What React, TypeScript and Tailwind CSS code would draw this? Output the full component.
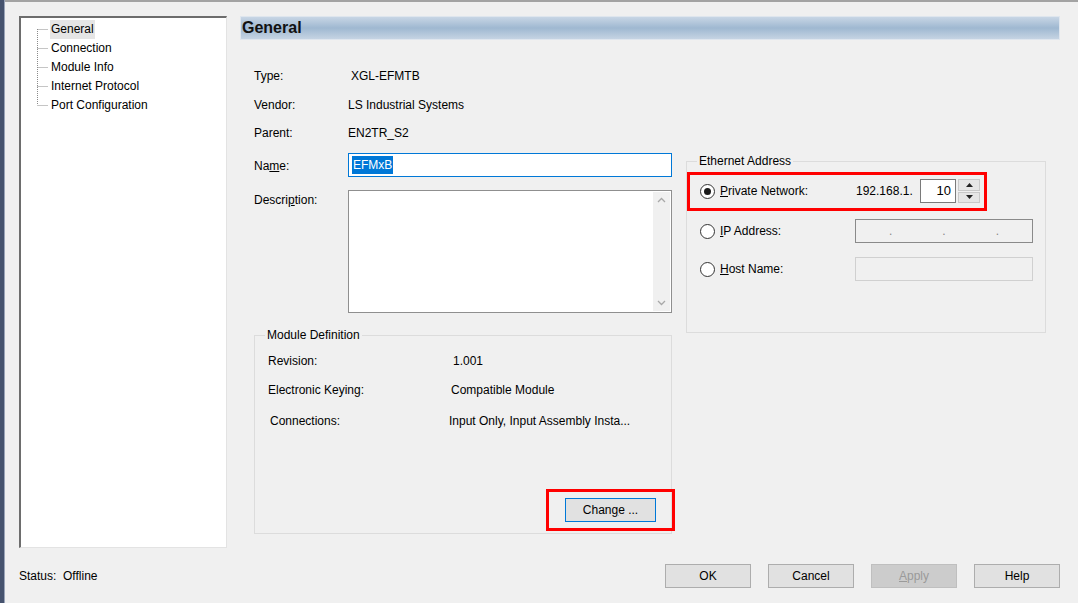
import React from 'react';

// Fenêtre de propriétés du module (style Windows classique)
const font = { fontFamily: '"Liberation Sans", Arial, sans-serif' };

function TreeLines() {
  return (
    <svg width="14" height="90" className="shrink-0" aria-hidden>
      <g stroke="#8a8a8a" strokeDasharray="1 1" strokeWidth="1" fill="none">
        <path d="M2.5 9 V85" />
        <path d="M2.5 9.5 H13" />
        <path d="M2.5 28.5 H13" />
        <path d="M2.5 47.5 H13" />
        <path d="M2.5 66.5 H13" />
        <path d="M2.5 85.5 H13" />
      </g>
    </svg>
  );
}

function Radio({ checked }: { checked?: boolean }) {
  return (
    <span className="w-[15px] h-[15px] rounded-full border border-[#333] bg-white flex items-center justify-center shrink-0">
      {checked && <span className="w-[7px] h-[7px] rounded-full bg-[#1a1a1a]" />}
    </span>
  );
}

function Btn({ children, disabled }: { children: React.ReactNode; disabled?: boolean }) {
  return (
    <div
      className={
        disabled
          ? 'w-[86px] h-[24px] flex items-center justify-center border border-[#bfbfbf] bg-[#cccccc] text-[#9a9a9a]'
          : 'w-[86px] h-[24px] flex items-center justify-center border border-[#adadad] bg-[#e1e1e1] text-black'
      }
    >
      {children}
    </div>
  );
}

export default function App() {
  return (
    <div className="relative w-[1078px] h-[603px] bg-[#f0f0f0] flex text-[12px] text-black overflow-hidden" style={font}>
      {/* bord gauche de la fenêtre */}
      <div className="w-[5px] h-full flex shrink-0">
        <div className="w-[4px] bg-[#46536e]" />
        <div className="w-[1px] bg-[#9aa4b8]" />
      </div>

      <div className="flex-1 flex flex-col border-t-2 border-[#a3a3a3]">
        <div className="flex mt-[14px]">
          {/* arbre de navigation */}
          <div className="ml-[14px] w-[208px] h-[532px] bg-white border-l-2 border-t-2 border-[#6d6d6d] border-r border-b border-r-[#e3e3e3] border-b-[#e3e3e3] pt-[2px] pl-[14px] flex">
            <TreeLines />
            <div className="flex flex-col leading-[19px] pl-[1px]">
              <span className="bg-[#e5e5e5] px-[1px] w-fit">General</span>
              <span className="px-[1px]">Connection</span>
              <span className="px-[1px]">Module Info</span>
              <span className="px-[1px]">Internet Protocol</span>
              <span className="px-[1px]">Port Configuration</span>
            </div>
          </div>

          {/* contenu */}
          <div className="ml-[13px] w-[820px] flex flex-col">
            <div className="h-[24px] bg-linear-to-b from-[#c8d6e5] via-[#9fb8d1] to-[#c5d4e3] border border-[#dfe6ee] flex items-center pl-[1px]">
              <span className="font-bold text-[16px] text-[#111]">General</span>
            </div>

            <div className="flex pl-[14px] mt-[21px]">
              {/* colonne gauche */}
              <div className="w-[418px] flex flex-col">
                <div className="h-[29px] flex items-start pt-[6px]">
                  <span className="w-[97px]">Type:</span>
                  <span>XGL-EFMTB</span>
                </div>
                <div className="h-[29px] flex items-center">
                  <span className="w-[94px]">Vendor:</span>
                  <span>LS Industrial Systems</span>
                </div>
                <div className="h-[28px] flex items-center">
                  <span className="w-[94px]">Parent:</span>
                  <span>EN2TR_S2</span>
                </div>
                <div className="mt-[6px] flex items-center">
                  <span className="w-[94px] pt-[2px]">
                    Na<span className="underline">m</span>e:
                  </span>
                  <div className="w-[324px] h-[24px] bg-white border border-[#0078d7] flex items-center pl-[3px]">
                    <span className="bg-[#0078d7] text-white px-[1px]">EFMxB</span>
                  </div>
                </div>
                <div className="mt-[13px] flex">
                  <span className="w-[94px] mt-[1px]">
                    Descri<span className="underline">p</span>tion:
                  </span>
                  <div className="w-[324px] h-[123px] bg-white border border-[#8f8f8f] flex justify-end p-[1px]">
                    <div className="w-[17px] h-full bg-[#f0f0f0] flex flex-col justify-between items-center py-[5px]">
                      <svg width="9" height="6" viewBox="0 0 9 6"><path d="M1 5 L4.5 1.5 L8 5" stroke="#a8a8a8" strokeWidth="1.3" fill="none" /></svg>
                      <svg width="9" height="6" viewBox="0 0 9 6"><path d="M1 1 L4.5 4.5 L8 1" stroke="#a8a8a8" strokeWidth="1.3" fill="none" /></svg>
                    </div>
                  </div>
                </div>

                <fieldset className="mt-[14px] border border-[#dcdcdc] px-[13px]">
                  <legend className="ml-[-3px] px-[2px] leading-[16px]">Module Definition</legend>
                  <div className="h-[190px] flex flex-col">
                    <div className="grid grid-cols-[183px_1fr] mt-[3px]">
                      <span className="h-[29px] flex items-center">Revision:</span>
                      <span className="h-[29px] flex items-center ml-[2px]">1.001</span>
                      <span className="h-[29px] flex items-center">Electronic Keying:</span>
                      <span className="h-[29px] flex items-center">Compatible Module</span>
                      <span className="h-[31px] flex items-center pl-[2px] pt-[2px]">Connections:</span>
                      <span className="h-[31px] flex items-center pt-[2px] ml-[-2px]">Input Only, Input Assembly Insta...</span>
                    </div>
                    <div className="mt-auto mb-[11px] flex justify-end mr-[2px]">
                      <div className="w-[91px] h-[24px] border border-[#0078d7] bg-[#e1e1e1] flex items-center justify-center">
                        Chan<span className="underline">g</span>e ...
                      </div>
                    </div>
                  </div>
                </fieldset>
              </div>

              {/* colonne droite : adresse Ethernet */}
              <fieldset className="ml-[14px] mt-[92px] w-[360px] border border-[#dcdcdc] pl-[13px] self-start">
                <legend className="ml-[-3px] px-[2px] leading-[16px]">Ethernet Address</legend>
                <div className="h-[163px] flex flex-col">
                  <div className="mt-[10px] h-[24px] flex items-center">
                    <Radio checked />
                    <span className="ml-[5px] w-[136px]">
                      <span className="underline">P</span>rivate Network:
                    </span>
                    <span className="w-[64px]">192.168.1.</span>
                    <div className="w-[36px] h-[24px] bg-white border border-[#7a7a7a] flex items-center justify-end pr-[4px] text-[13px]">10</div>
                    <div className="ml-[2px] w-[22px] h-[24px] flex flex-col gap-[1px]">
                      <div className="flex-1 bg-[#e6e6e6] border border-[#c9c9c9] flex items-center justify-center">
                        <svg width="7" height="4" viewBox="0 0 7 4"><path d="M0 4 L3.5 0 L7 4Z" fill="#222" /></svg>
                      </div>
                      <div className="flex-1 bg-[#e6e6e6] border border-[#c9c9c9] flex items-center justify-center">
                        <svg width="7" height="4" viewBox="0 0 7 4"><path d="M0 0 L3.5 4 L7 0Z" fill="#222" /></svg>
                      </div>
                    </div>
                  </div>
                  <div className="mt-[16px] h-[24px] flex items-center">
                    <Radio />
                    <span className="ml-[5px] w-[135px]">
                      <span className="underline">I</span>P Address:
                    </span>
                    <div className="w-[178px] h-[24px] border border-[#8a8a8a] bg-[#f0f0f0] flex items-center justify-around px-[8px] text-[#888]">
                      <span>.</span>
                      <span>.</span>
                      <span>.</span>
                    </div>
                  </div>
                  <div className="mt-[14px] h-[24px] flex items-center">
                    <Radio />
                    <span className="ml-[5px] w-[135px]">
                      <span className="underline">H</span>ost Name:
                    </span>
                    <div className="w-[178px] h-[24px] border border-[#d0d0d0] bg-[#f0f0f0]" />
                  </div>
                </div>
              </fieldset>
            </div>
          </div>
        </div>

        {/* barre du bas */}
        <div className="flex items-start mt-[16px]">
          <span className="ml-[14px] mt-[3px]">Status:&nbsp; Offline</span>
          <div className="ml-auto mr-[18px] flex gap-[17px]">
            <Btn>OK</Btn>
            <Btn>Cancel</Btn>
            <Btn disabled>
              <span className="underline">A</span>pply
            </Btn>
            <Btn>Help</Btn>
          </div>
        </div>
      </div>

      {/* encadrés rouges d'annotation */}
      <div className="absolute left-[687px] top-[172px] w-[300px] h-[39px] border-[3px] border-[#ff0000] pointer-events-none" />
      <div className="absolute left-[546px] top-[489px] w-[129px] h-[42px] border-[3px] border-[#ff0000] pointer-events-none" />
    </div>
  );
}
